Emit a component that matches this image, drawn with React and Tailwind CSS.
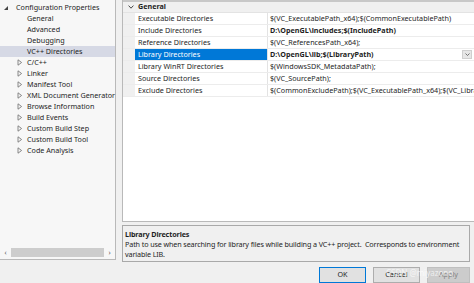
import React from "react";

const F = { fontFamily: '"Segoe UI", "Noto Sans", sans-serif' };

function Collapsed() {
  return (
    <svg width="6" height="7" viewBox="0 0 6 7" className="shrink-0">
      <path d="M1 0.8 L4.6 3.5 L1 6.2 Z" fill="none" stroke="#7a7a7a" strokeWidth="0.9" />
    </svg>
  );
}
function Expanded() {
  return (
    <svg width="6" height="6" viewBox="0 0 6 6" className="shrink-0">
      <path d="M5 1 L5 5 L1 5 Z" fill="#444" />
    </svg>
  );
}

const tree = [
  { t: "General", kind: "leaf" },
  { t: "Advanced", kind: "leaf" },
  { t: "Debugging", kind: "leaf" },
  { t: "VC++ Directories", kind: "leaf", sel: true },
  { t: "C/C++", kind: "col" },
  { t: "Linker", kind: "col" },
  { t: "Manifest Tool", kind: "col" },
  { t: "XML Document Generator", kind: "col" },
  { t: "Browse Information", kind: "col" },
  { t: "Build Events", kind: "col" },
  { t: "Custom Build Step", kind: "col" },
  { t: "Custom Build Tool", kind: "col" },
  { t: "Code Analysis", kind: "col" },
];

const rows = [
  { n: "Executable Directories", v: "$(VC_ExecutablePath_x64);$(CommonExecutablePath)" },
  { n: "Include Directories", v: "D:\\OpenGL\\includes;$(IncludePath)", b: true },
  { n: "Reference Directories", v: "$(VC_ReferencesPath_x64);" },
  { n: "Library Directories", v: "D:\\OpenGL\\lib;$(LibraryPath)", b: true, sel: true },
  { n: "Library WinRT Directories", v: "$(WindowsSDK_MetadataPath);" },
  { n: "Source Directories", v: "$(VC_SourcePath);" },
  { n: "Exclude Directories", v: "$(CommonExcludePath);$(VC_ExecutablePath_x64);$(VC_LibraryPath_x64)" },
];

export default function App() {
  return (
    <div className="w-[474px] h-[283px] bg-[#f0f0f0] flex flex-col overflow-hidden relative text-[7.2px] text-[#1e1e1e] leading-none" style={F}>
      <div className="flex h-[262px]">
        {/* tree */}
        <div className="w-[116px] h-[260px] bg-[#f7f7f7] border-r border-b border-[#b9b9b9] flex flex-col shrink-0">
          <div className="flex-1 pt-[2px]">
            <div className="h-[11px] flex items-center pl-[3px] gap-[7px] whitespace-nowrap">
              <Expanded />
              <span>Configuration Properties</span>
            </div>
            {tree.map((it) => (
              <div
                key={it.t}
                className={`h-[11px] flex items-center whitespace-nowrap ${it.sel ? "bg-[#d6d9e5]" : ""} ${it.kind === "leaf" ? "pl-[27px]" : "pl-[17px] gap-[4px]"}`}
              >
                {it.kind === "col" && <Collapsed />}
                <span>{it.t}</span>
              </div>
            ))}
          </div>
          <div className="h-[11px] mb-[1px] flex items-center px-[2px] gap-[2px]">
            <span className="w-[7px] text-[7px] text-[#606060] text-center">‹</span>
            <div className="flex-1 h-[9px] bg-[#cdcdcd]" />
            <span className="w-[7px] text-[7px] text-[#606060] text-center">›</span>
          </div>
        </div>

        <div className="w-[6px] shrink-0" />

        {/* right */}
        <div className="flex-1 flex flex-col min-w-0">
          <div className="h-[222px] bg-white border-l border-b border-[#b9b9b9] flex flex-col overflow-hidden">
            <div className="h-[2px] bg-[#c8c8c8]" />
            <div className="h-[11px] bg-[#f0f0f0] flex items-center border-b border-[#e3e3e3]">
              <div className="w-[11px] flex justify-end">
                <svg width="6" height="4" viewBox="0 0 6 4">
                  <path d="M0.6 0.6 L3 3.2 L5.4 0.6" fill="none" stroke="#333" strokeWidth="0.9" />
                </svg>
              </div>
              <span className="ml-[4px] font-bold">General</span>
            </div>
            {rows.map((r) => (
              <div key={r.n} className="h-[12px] flex border-b border-[#ececec]">
                <div className="w-[12px] bg-[#f0f0f0] shrink-0" />
                <div className={`w-[133px] shrink-0 flex items-center pl-[3px] whitespace-nowrap border-r border-[#e3e3e3] ${r.sel ? "bg-[#0078d7] text-white" : ""}`}>
                  {r.n}
                </div>
                <div className="flex-1 flex items-center pl-[2px] whitespace-nowrap overflow-hidden relative">
                  <span className={r.b ? "font-bold" : ""}>{r.v}</span>
                  {r.sel && (
                    <div className="absolute right-[2px] top-[1px] w-[10px] h-[9px] bg-[#e6e6e6] border border-[#cfcfcf] flex items-center justify-center">
                      <svg width="5" height="3" viewBox="0 0 5 3">
                        <path d="M0.5 0.5 L2.5 2.5 L4.5 0.5" fill="none" stroke="#555" strokeWidth="0.8" />
                      </svg>
                    </div>
                  )}
                </div>
              </div>
            ))}
          </div>
          <div className="h-[3px]" />
          <div className="h-[37px] mr-[4px] border border-[#a9a9a9] bg-[#f0f0f0] pl-[2px] pr-[1px] pt-[3px] leading-[10px] tracking-[-0.12px]">
            <div className="font-bold">Library Directories</div>
            <div>Path to use when searching for library files while building a VC++ project.&nbsp; Corresponds to environment variable LIB.</div>
          </div>
        </div>
      </div>

      {/* buttons */}
      <div className="flex justify-end gap-[7px] pr-[4px] pt-[5px]">
        <div className="w-[47px] h-[16px] bg-[#e1e1e1] border border-[#0078d7] flex items-center justify-center">OK</div>
        <div className="w-[47px] h-[16px] bg-[#e1e1e1] border border-[#adadad] flex items-center justify-center">Cancel</div>
        <div className="w-[43px] h-[16px] bg-[#cccccc] border border-[#bfbfbf] flex items-center justify-center text-[#838383]">Apply</div>
      </div>
      <div className="absolute left-[386px] top-[269px] text-[8px] text-white/70 whitespace-nowrap">CSDN @miyazono</div>
    </div>
  );
}
